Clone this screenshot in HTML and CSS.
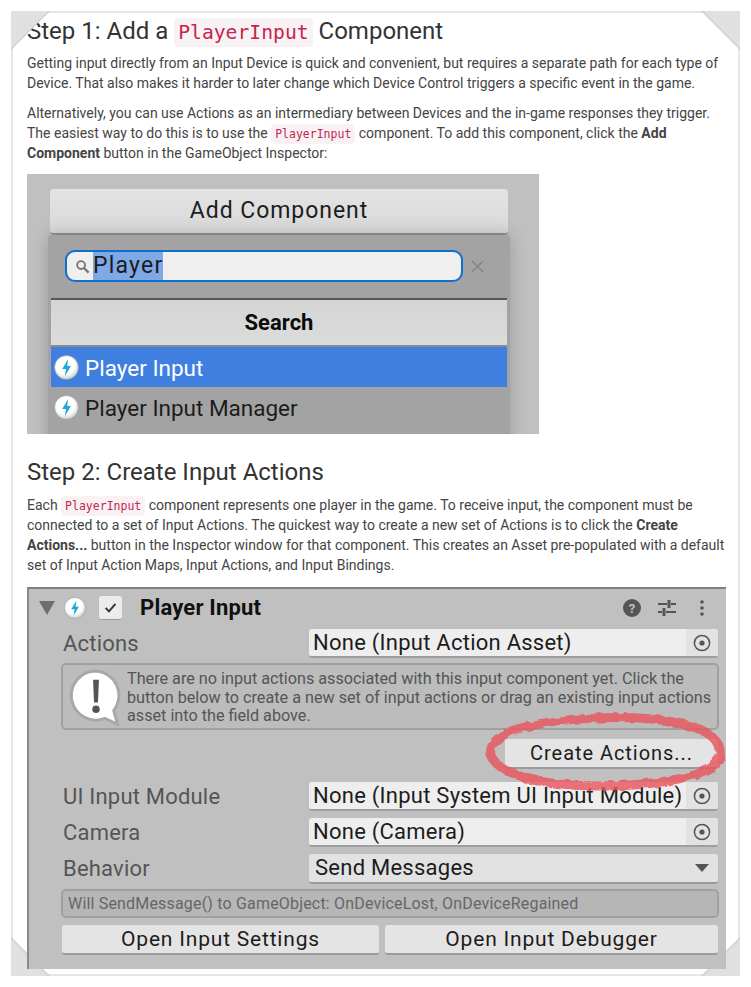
FILE: index.html
```html
<!DOCTYPE html>
<html lang="en">
<head>
    <meta charset="UTF-8">
    <meta name="viewport" content="width=device-width, initial-scale=1.0">
    <title>Input System Quick Start</title>
    <link rel="stylesheet" href="styles.css">
</head>
<body>
    <svg class="defs" width="0" height="0" aria-hidden="true">
        <defs>
            <radialGradient id="disc" cx="45%" cy="40%" r="65%">
                <stop offset="0.6" stop-color="#ffffff"/>
                <stop offset="1" stop-color="#b9c3c8"/>
            </radialGradient>
            <symbol id="bolt-icon" viewBox="0 0 24 24">
                <circle cx="12" cy="12" r="11.5" fill="url(#disc)" stroke="#8f979b" stroke-width="0.6"/>
                <path d="M13.6 3.8 7.9 13.4h3.6l-1 6.9 5.7-9.8h-3.6z" fill="#1da6d6"/>
            </symbol>
            <symbol id="target-icon" viewBox="0 0 18 18">
                <circle cx="9" cy="9" r="7.6" fill="none" stroke="#555" stroke-width="1.5"/>
                <circle cx="9" cy="9" r="2.6" fill="#555"/>
            </symbol>
            <filter id="rough" x="-5%" y="-15%" width="110%" height="130%">
                <feTurbulence type="fractalNoise" baseFrequency="0.09" numOctaves="3" seed="4"/>
                <feDisplacementMap in="SourceGraphic" scale="6"/>
            </filter>
        </defs>
    </svg>

    <div class="page">
        <span class="fold fold-tl"></span>
        <span class="fold fold-tr"></span>
        <span class="fold fold-bl"></span>
        <span class="fold fold-br"></span>

        <h2>Step 1: Add a <code>PlayerInput</code> Component</h2>
        <p>Getting input directly from an Input Device is quick and convenient, but requires a separate path for each type of Device. That also makes it harder to later change which Device Control triggers a specific event in the game.</p>
        <p>Alternatively, you can use Actions as an intermediary between Devices and the in-game responses they trigger. The easiest way to do this is to use the <code>PlayerInput</code> component. To add this component, click the <b>Add Component</b> button in the GameObject Inspector:</p>

        <div class="shot-add">
            <div class="add-button">Add Component</div>
            <div class="popup">
                <div class="search-row">
                    <div class="search-field">
                        <svg class="search-icon" viewBox="0 0 16 16">
                            <circle cx="6.5" cy="6.5" r="4.2" fill="none" stroke="#777" stroke-width="2"/>
                            <path d="M9.6 9.6 14.5 14.5" stroke="#777" stroke-width="2.4"/>
                        </svg>
                        <span class="selection">Player</span>
                    </div>
                    <svg class="clear-icon" viewBox="0 0 14 14">
                        <path d="M1 1 13 13M13 1 1 13" stroke="#828282" stroke-width="1.4"/>
                    </svg>
                </div>
                <div class="popup-title">Search</div>
                <div class="result result-on"><svg class="result-icon"><use href="#bolt-icon"/></svg>Player Input</div>
                <div class="result"><svg class="result-icon"><use href="#bolt-icon"/></svg>Player Input Manager</div>
                <div class="result"><span class="result-blank"></span></div>
            </div>
        </div>

        <h3>Step 2: Create Input Actions</h3>
        <p>Each <code>PlayerInput</code> component represents one player in the game. To receive input, the component must be connected to a set of Input Actions. The quickest way to create a new set of Actions is to click the <b>Create Actions...</b> button in the Inspector window for that component. This creates an Asset pre-populated with a default set of Input Action Maps, Input Actions, and Input Bindings.</p>

        <div class="inspector">
            <div class="title-row">
                <span class="arrow-down"></span>
                <svg class="title-icon"><use href="#bolt-icon"/></svg>
                <span class="checkbox">
                    <svg viewBox="0 0 14 14"><path d="M2.5 7.5 5.6 10.6 11.6 3.6" fill="none" stroke="#333" stroke-width="1.8"/></svg>
                </span>
                <span class="title-text">Player Input</span>
                <span class="title-tools">
                    <svg viewBox="0 0 18 18" class="tool"><circle cx="9" cy="9" r="9" fill="#555"/><text x="9" y="13.5" class="help-mark">?</text></svg>
                    <svg viewBox="0 0 18 18" class="tool"><path d="M0 5h9M13 5h5M0 13h4M8 13h10" stroke="#555" stroke-width="1.8"/><path d="M11 1v8M6 9v8" stroke="#555" stroke-width="3"/></svg>
                    <svg viewBox="0 0 18 18" class="tool"><circle cx="9" cy="3" r="1.8" fill="#555"/><circle cx="9" cy="9" r="1.8" fill="#555"/><circle cx="9" cy="15" r="1.8" fill="#555"/></svg>
                </span>
            </div>

            <div class="field-row">
                <span class="field-label">Actions</span>
                <span class="object-field"><span class="object-name">None (Input Action Asset)</span><span class="object-pick"><svg><use href="#target-icon"/></svg></span></span>
            </div>

            <div class="help-box">
                <svg class="bubble" viewBox="0 0 54 58">
                    <path d="M27 2a25 25 0 1 0 9 48.300l13 6-4-14A25 25 0 0 0 27 2z" fill="#fff" stroke="#a8a8a8" stroke-width="3"/>
                    <path d="M24 11h6l-1 23h-4z" fill="#555"/>
                    <circle cx="27" cy="41" r="3.800" fill="#555"/>
                </svg>
                <span>There are no input actions associated with this input component yet. Click the button below to create a new set of input actions or drag an existing input actions asset into the field above.</span>
            </div>

            <div class="create-row"><span class="unity-button create-button">Create Actions...</span></div>

            <div class="field-row">
                <span class="field-label">UI Input Module</span>
                <span class="object-field"><span class="object-name">None (Input System UI Input Module)</span><span class="object-pick"><svg><use href="#target-icon"/></svg></span></span>
            </div>
            <div class="field-row">
                <span class="field-label">Camera</span>
                <span class="object-field"><span class="object-name">None (Camera)</span><span class="object-pick"><svg><use href="#target-icon"/></svg></span></span>
            </div>
            <div class="field-row">
                <span class="field-label">Behavior</span>
                <span class="dropdown">Send Messages<span class="dropdown-arrow"></span></span>
            </div>

            <div class="note-box">Will SendMessage() to GameObject: OnDeviceLost, OnDeviceRegained</div>

            <div class="button-row">
                <span class="unity-button">Open Input Settings</span>
                <span class="unity-button">Open Input Debugger</span>
            </div>

            <svg class="red-circle" viewBox="0 0 250 84">
                <path d="M26 18C75 2 165 0 208 14 232 22 238 34 234 46 226 64 170 73 112 73 60 73 12 62 6 42 4 32 12 24 26 18z" fill="none" stroke="#e8555d" stroke-width="9" stroke-opacity="0.82" filter="url(#rough)"/>
            </svg>
        </div>
    </div>
</body>
</html>
```

FILE: styles.css
```css
* {
    box-sizing: border-box;
}

body {
    margin: 11px;
    background-color: #ffffff;
    font-family: Roboto, Arial, sans-serif;
    font-size: 14px;
    line-height: 20px;
    color: #444;
}

.defs {
    position: absolute;
}

.page {
    position: relative;
    height: 965px;
    border: 2px solid #e6e6e6;
    padding: 4px 12px 0 14px;
}

.fold {
    position: absolute;
    width: 41px;
    height: 41px;
}

.fold-tl {
    top: -3px;
    left: -3px;
    clip-path: polygon(0 0, 100% 0, 0 100%);
    background-image: linear-gradient(135deg, #e0e0e0 47%, #c6c6c6 50%);
}

.fold-tr {
    top: -3px;
    right: -3px;
    clip-path: polygon(0 0, 100% 0, 100% 100%);
    background-image: linear-gradient(225deg, #e0e0e0 47%, #c6c6c6 50%);
}

.fold-bl {
    bottom: -3px;
    left: -3px;
    clip-path: polygon(0 0, 100% 100%, 0 100%);
    background-image: linear-gradient(45deg, #e0e0e0 47%, #c6c6c6 50%);
}

.fold-br {
    bottom: -3px;
    right: -3px;
    clip-path: polygon(100% 0, 100% 100%, 0 100%);
    background-image: linear-gradient(315deg, #e0e0e0 47%, #c6c6c6 50%);
}

h2, h3 {
    margin: 0;
    font-size: 24px;
    font-weight: 400;
    line-height: 29px;
    color: #333;
}

h2 {
    margin-bottom: 7px;
}

h3 {
    margin-top: 24px;
    margin-bottom: 8px;
}

p {
    margin: 0 0 10px 0;
}

b {
    font-weight: 700;
}

code {
    padding: 3px 4px;
    border-radius: 4px;
    background-color: #f9f2f4;
    color: #c7254e;
    font-family: "DejaVu Sans Mono", "Liberation Mono", monospace;
    font-size: 11.500px;
    line-height: 1;
}

h2 code {
    font-size: 19.700px;
}

/* first screenshot: add component popup */
.shot-add {
    width: 512px;
    height: 260px;
    margin-top: 11px;
    padding-top: 15px;
    overflow: hidden;
    background-color: #c0c0c0;
    color: #1c1c1c;
    font-size: 23px;
    letter-spacing: 0.95px;
}

.add-button {
    width: 458px;
    height: 46px;
    margin-left: 23px;
    border-radius: 4px;
    border-bottom: 2px solid #909090;
    background-image: linear-gradient(#e4e4e4, #d8d8d8);
    text-align: center;
    line-height: 44px;
}

.popup {
    width: 462px;
    height: 220px;
    margin-left: 21px;
    padding: 0 3px;
    border-radius: 3px;
    background-color: #a3a3a3;
    box-shadow: 0 0 18px rgba(0, 0, 0, 0.2);
}

.search-row {
    display: flex;
    align-items: center;
    gap: 8px;
    height: 65px;
    padding: 0 0 1px 14px;
    border-bottom: 2px solid #585858;
}

.search-field {
    display: flex;
    align-items: center;
    width: 398px;
    height: 32px;
    padding-left: 8px;
    border: 2px solid #0d6fd1;
    border-radius: 10px;
    background-color: #efefef;
}

.search-icon {
    width: 15px;
    height: 15px;
    margin-right: 3px;
}

.selection {
    background-color: #7fa8e6;
    line-height: 28px;
    letter-spacing: 1.2px;
}

.clear-icon {
    width: 13px;
    height: 13px;
}

.popup-title {
    height: 47px;
    border-bottom: 2px solid #8a8a8a;
    background-image: linear-gradient(#d4d4d4, #dcdcdc);
    color: #0c0c0c;
    font-weight: 700;
    font-size: 22px;
    letter-spacing: 0;
    text-align: center;
    line-height: 45px;
}

.result {
    display: flex;
    align-items: center;
    gap: 6px;
    height: 40px;
    padding: 1px 0 0 3px;
    font-size: 22.500px;
    letter-spacing: 0;
}

.result-on {
    background-color: #3f7fe0;
    color: #ffffff;
}

.result-icon {
    width: 25px;
    height: 25px;
}

.result-blank {
    width: 25px;
    height: 25px;
    border-radius: 50%;
    background-color: #999;
}

/* second screenshot: inspector window */
.inspector {
    position: relative;
    height: 382px;
    margin-top: 12px;
    padding: 0 7px 0 32px;
    overflow: hidden;
    border-top: 2px solid #7f7f7f;
    border-left: 2px solid #8a8a8a;
    background-color: #c0c0c0;
    color: #1c1c1c;
    font-size: 22px;
    letter-spacing: 0.25px;
}

.title-row {
    display: flex;
    align-items: center;
    height: 40px;
    margin-left: -22px;
    padding-bottom: 2px;
}

.arrow-down {
    width: 0;
    height: 0;
    margin-right: 9px;
    border-style: solid;
    border-width: 14px 8px 0 8px;
    border-color: #6e6e6e transparent transparent transparent;
}

.title-icon {
    width: 22px;
    height: 22px;
    margin-right: 13px;
}

.checkbox {
    display: flex;
    align-items: center;
    justify-content: center;
    width: 23px;
    height: 24px;
    margin-right: 18px;
    border-radius: 3px;
    border-bottom: 1px solid #999;
    background-color: #ececec;
}

.checkbox svg {
    width: 15px;
    height: 15px;
}

.title-text {
    color: #111;
    font-size: 22px;
    font-weight: 700;
    letter-spacing: 0.2px;
}

.title-tools {
    display: flex;
    gap: 17px;
    margin-left: auto;
    margin-right: 8px;
}

.tool {
    width: 18px;
    height: 18px;
}

.help-mark {
    fill: #c0c0c0;
    font-size: 13px;
    font-weight: 700;
    text-anchor: middle;
}

.field-row {
    display: grid;
    grid-template-columns: 248px 409px;
    align-items: center;
    height: 29px;
    margin-bottom: 7px;
}

.field-label {
    padding-left: 2px;
    color: #555;
    font-size: 22px;
    letter-spacing: 0.2px;
}

.object-field {
    display: flex;
    height: 29px;
    overflow: hidden;
    border-radius: 3px;
    border-bottom: 2px solid #9e9e9e;
    background-color: #eeeeee;
    line-height: 28px;
}

.object-name {
    flex: 1;
    padding-left: 4px;
    white-space: nowrap;
}

.object-pick {
    display: flex;
    align-items: center;
    justify-content: center;
    width: 32px;
    background-color: #e2e2e2;
}

.object-pick svg {
    width: 18px;
    height: 18px;
}

.help-box {
    display: flex;
    gap: 4px;
    width: 658px;
    height: 67px;
    margin-top: -2px;
    padding: 5px 1px 0 6px;
    border: 2px solid #a0a0a0;
    border-radius: 5px;
    background-color: #bcbcbc;
    color: #555;
    font-size: 16.200px;
    line-height: 18.700px;
    letter-spacing: 0;
}

.bubble {
    flex: none;
    width: 54px;
    height: 57px;
    margin-top: -1px;
}

.create-row {
    display: flex;
    justify-content: flex-end;
    width: 657px;
    margin-top: 9px;
    margin-bottom: 13px;
}

.unity-button {
    display: block;
    height: 30px;
    border-radius: 3px;
    border-bottom: 2px solid #9a9a9a;
    background-color: #e4e4e4;
    font-size: 21px;
    line-height: 28px;
    letter-spacing: 0.8px;
    text-align: center;
}

.create-button {
    width: 213px;
    font-size: 20px;
    letter-spacing: 0.95px;
}

.dropdown {
    display: flex;
    align-items: center;
    justify-content: space-between;
    height: 30px;
    padding: 0 9px 0 6px;
    border-radius: 3px;
    border-bottom: 2px solid #9a9a9a;
    background-color: #e2e2e2;
}

.dropdown-arrow {
    width: 0;
    height: 0;
    border-style: solid;
    border-width: 8px 7px 0 7px;
    border-color: #555 transparent transparent transparent;
}

.note-box {
    width: 658px;
    height: 29px;
    margin-top: -1px;
    padding-left: 5px;
    border: 2px solid #a0a0a0;
    border-radius: 5px;
    background-color: #b6b6b6;
    color: #666;
    font-size: 16px;
    line-height: 25px;
    letter-spacing: 0.18px;
}

.button-row {
    display: grid;
    grid-template-columns: 317px 333px;
    gap: 6px;
    margin-top: 7px;
    margin-left: 1px;
}

.red-circle {
    position: absolute;
    top: 124px;
    left: 456px;
    width: 250px;
    height: 84px;
    overflow: visible;
}
```
